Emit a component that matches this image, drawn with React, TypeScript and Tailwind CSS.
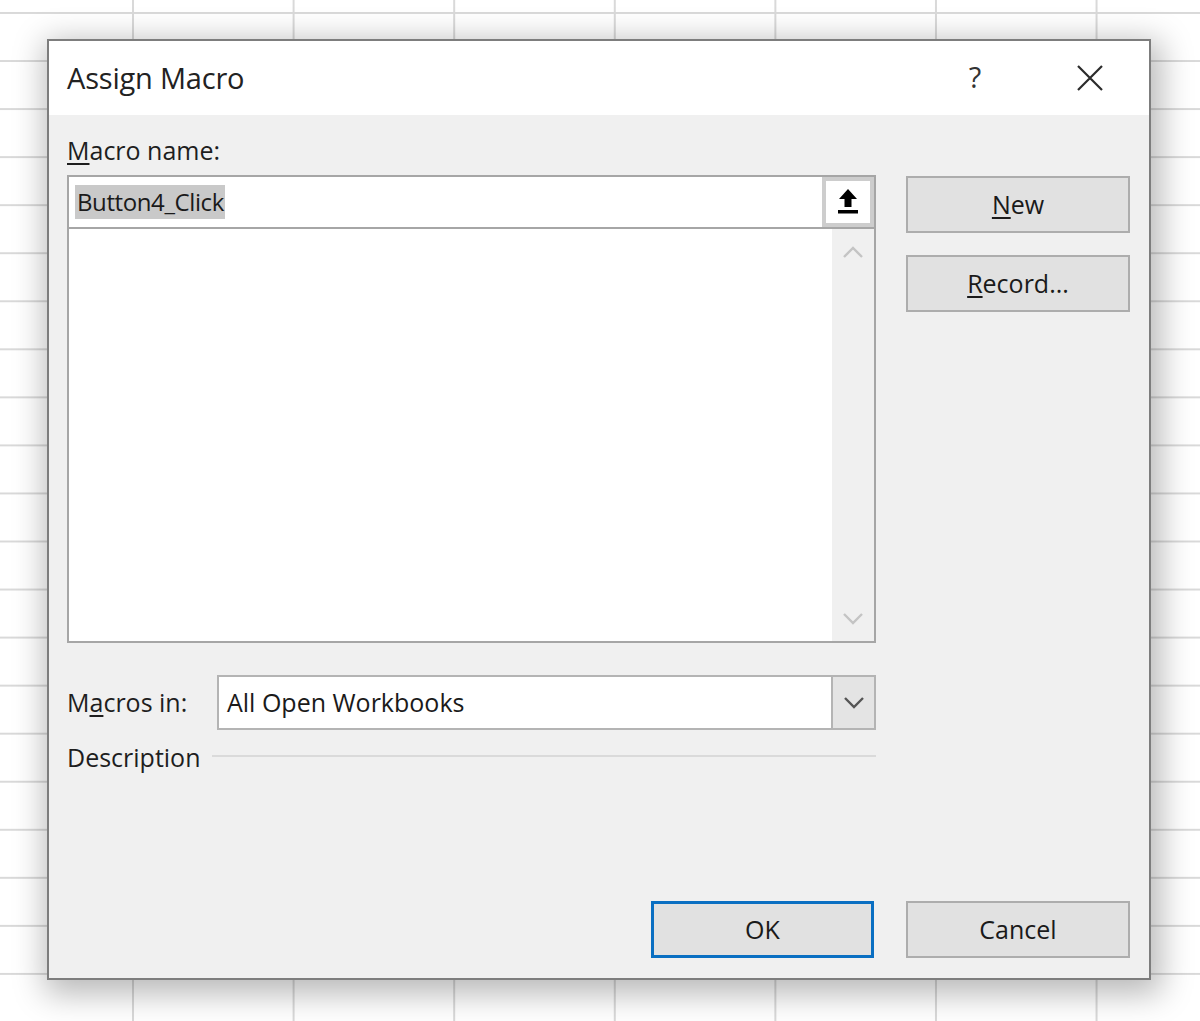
import React from 'react';

const FONT = "font-['Open_Sans','Noto_Sans',sans-serif]";

const Accel = ({ ch }: { ch: string }) => (
  <span className="underline decoration-[2px] underline-offset-[3px]">{ch}</span>
);

const Chevron = ({ dir, className }: { dir: 'up' | 'down'; className: string }) => (
  <svg width="22" height="14" viewBox="0 0 22 14" className={className}>
    {dir === 'up' ? (
      <path d="M2 12 L11 3 L20 12" fill="none" stroke="currentColor" strokeWidth="2.4" />
    ) : (
      <path d="M2 2 L11 11 L20 2" fill="none" stroke="currentColor" strokeWidth="2.4" />
    )}
  </svg>
);

const UploadIcon = () => (
  <svg width="22" height="28" viewBox="0 0 22 28">
    <path d="M11 2 L20 12 L14.5 12 L14.5 20 L7.5 20 L7.5 12 L2 12 Z" fill="#000" />
    <rect x="1" y="23" width="20" height="3.5" fill="#000" />
  </svg>
);

const WinButton = ({
  children,
  primary,
  className = '',
}: {
  children: React.ReactNode;
  primary?: boolean;
  className?: string;
}) => (
  <button
    className={`flex items-center justify-center bg-[#e1e1e1] text-[#1a1a1a] text-[25px] ${
      primary ? 'border-[3px] border-[#0a6fc2]' : 'border-2 border-[#adadad]'
    } ${className}`}
  >
    {children}
  </button>
);

export default function App() {
  return (
    <div
      className={`${FONT} w-[1200px] h-[1021px] overflow-hidden bg-white bg-[linear-gradient(to_right,#d9d9d9_2px,transparent_2px),linear-gradient(to_bottom,#d9d9d9_2px,transparent_2px)] bg-[size:160.6px_48.05px] bg-[position:132px_12px] pt-[39px] pl-[47px]`}
    >
      {/* Dialog window */}
      <div className="w-[1104px] h-[941px] border-2 border-[#7d7d7d] bg-[#f0f0f0] flex flex-col shadow-[4px_8px_30px_6px_rgba(0,0,0,0.28)]">
        {/* Title bar */}
        <div className="h-[74px] bg-white flex items-center pl-[18px] shrink-0">
          <div className="text-[29px] text-[#222] tracking-[-0.2px] flex-1 pb-[1px]">Assign Macro</div>
          <div className="w-[40px] text-center text-[29px] text-[#333] mr-[82px] pb-[2px]">?</div>
          <svg width="26" height="26" viewBox="0 0 26 26" className="mr-[46px]">
            <path d="M1 1 L25 25 M25 1 L1 25" stroke="#2b2b2b" strokeWidth="2.2" />
          </svg>
        </div>

        {/* Body */}
        <div className="flex-1 flex flex-col pl-[18px] pr-[19px]">
          <div className="flex gap-[30px]">
            {/* Left column */}
            <div className="w-[809px] flex flex-col">
              <div className="mt-[15px] h-[40px] leading-[40px] text-[25px] text-[#1e1e1e]">
                <Accel ch="M" />acro name:
              </div>
              <div className="mt-[5px] h-[52px] bg-white border-2 border-b-0 border-[#a6a6a6] flex items-center">
                <div className="flex-1 pl-[6px]">
                  <span className="bg-[#c9c9c9] text-[24px] tracking-[-0.4px] text-[#1a1a1a] leading-[34px] inline-block pl-[2px] pr-[1px]">
                    Button4_Click
                  </span>
                </div>
                <div className="w-[52px] h-[50px] border-[4px] border-[#cdcdcd] bg-white flex items-center justify-center pb-[2px]">
                  <UploadIcon />
                </div>
              </div>
              <div className="h-[416px] bg-white border-2 border-[#a6a6a6] flex justify-end">
                <div className="w-[42px] bg-[#f0f0f0] flex flex-col items-center justify-between pt-[16px] pb-[15px]">
                  <Chevron dir="up" className="text-[#c4c4c4]" />
                  <Chevron dir="down" className="text-[#c4c4c4]" />
                </div>
              </div>

              <div className="mt-[32px] flex items-center">
                <div className="w-[150px] text-[25px] text-[#1e1e1e]">
                  M<Accel ch="a" />cros in:
                </div>
                <div className="flex-1 h-[55px] bg-white border-2 border-[#b4b4b4] flex items-center">
                  <div className="flex-1 pl-[8px] text-[25px] text-[#1a1a1a]">All Open Workbooks</div>
                  <div className="w-[43px] h-full bg-[#e4e4e4] border-l-2 border-[#b4b4b4] flex items-center justify-center">
                    <Chevron dir="down" className="text-[#555]" />
                  </div>
                </div>
              </div>

              <div className="mt-[8px] flex items-center gap-[12px]">
                <div className="text-[25px] text-[#1e1e1e] leading-[38px]">Description</div>
                <div className="flex-1 h-[2px] bg-[#dadada] mb-[3px]"></div>
              </div>
            </div>

            {/* Right column */}
            <div className="w-[224px] flex flex-col pt-[61px] gap-[22px]">
              <WinButton className="h-[57px] pt-[1px]">
                <Accel ch="N" />ew
              </WinButton>
              <WinButton className="h-[57px]">
                <Accel ch="R" />ecord...
              </WinButton>
            </div>
          </div>

          <div className="flex-1"></div>

          {/* Footer buttons */}
          <div className="flex justify-end gap-[32px] pb-[20px]">
            <WinButton primary className="w-[223px] h-[57px]">
              OK
            </WinButton>
            <WinButton className="w-[224px] h-[57px]">Cancel</WinButton>
          </div>
        </div>
      </div>
    </div>
  );
}
